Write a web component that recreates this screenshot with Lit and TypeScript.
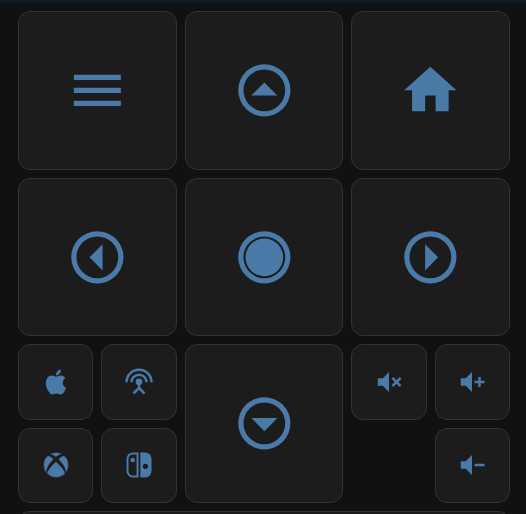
import { LitElement, html, css, svg } from "lit";
import { customElement } from "lit/decorators.js";

const RING = "M12,2A10,10 0 0,1 22,12A10,10 0 0,1 12,22A10,10 0 0,1 2,12A10,10 0 0,1 12,2M12,4A8,8 0 0,0 4,12A8,8 0 0,0 12,20A8,8 0 0,0 20,12A8,8 0 0,0 12,4Z";
const SPK = "M3,9H7L12,4V20L7,15H3V9";

const ICONS: Record<string, unknown> = {
  menu: svg`<path d="M3,6H21V8H3V6M3,11H21V13H3V11M3,16H21V18H3V16Z"/>`,
  up: svg`<path fill-rule="evenodd" d="${RING}M7,14L12,9L17,14Z"/>`,
  down: svg`<path fill-rule="evenodd" d="${RING}M7,10L12,15L17,10Z"/>`,
  left: svg`<path fill-rule="evenodd" d="${RING}M14,7L9,12L14,17Z"/>`,
  right: svg`<path fill-rule="evenodd" d="${RING}M10,17L15,12L10,7Z"/>`,
  ok: svg`<path fill-rule="evenodd" d="${RING}"/><circle cx="12" cy="12" r="7.2"/>`,
  home: svg`<path d="M10,20V14H14V20H19V12H22L12,3L2,12H5V20H10Z"/>`,
  apple: svg`<path d="M18.71,19.5C17.88,20.74 17,21.95 15.66,21.97C14.32,22 13.89,21.18 12.37,21.18C10.84,21.18 10.37,21.95 9.1,22C7.79,22.05 6.8,20.68 5.96,19.47C4.25,17 2.94,12.45 4.7,9.39C5.57,7.87 7.13,6.91 8.82,6.88C10.1,6.86 11.32,7.75 12.11,7.75C12.89,7.75 14.37,6.68 15.92,6.84C16.57,6.87 18.39,7.1 19.56,8.82C19.47,8.88 17.39,10.1 17.41,12.63C17.44,15.65 20.06,16.66 20.09,16.67C20.06,16.74 19.67,18.11 18.71,19.5M13,3.5C13.73,2.67 14.94,2.04 15.94,2C16.07,3.17 15.6,4.35 14.9,5.19C14.21,6.04 13.07,6.7 11.95,6.61C11.8,5.46 12.36,4.26 13,3.5Z"/>`,
  cast: svg`<g fill="none" stroke="currentColor" stroke-width="2"><path d="M2,12.2A10,10 0 0 1 22,12.2"/><path d="M6,12.2A6,6 0 0 1 18,12.2"/><path d="M12,12V16.8L7.6,21.2M12,16.8L16.4,21.2"/></g><circle cx="12" cy="11.8" r="2.7"/>`,
  xbox: svg`<path class="xb" d="M6.43,3.72C6.5,3.66 6.57,3.6 6.62,3.56C8.18,2.56 10,2 12,2C13.88,2 15.64,2.5 17.14,3.42C17.25,3.5 17.54,3.69 17.7,3.88C16.25,2.28 12,5.7 12,5.7C10.5,4.57 9.17,3.8 8.16,3.5C7.31,3.29 6.73,3.5 6.46,3.7M19.34,5.21C19.29,5.16 19.24,5.11 19.2,5.06C18.84,4.66 18.38,4.56 18,4.59C17.61,4.71 15.9,5.32 13.8,7.31C13.8,7.31 16.17,9.61 17.62,11.96C19.07,14.31 19.93,16.16 19.4,18.73C21,16.95 22,14.59 22,12C22,9.38 21,7 19.34,5.21M15.73,12.96C15.08,12.24 14.13,11.21 12.86,9.95C12.59,9.68 12.3,9.4 12,9.1C12,9.1 11.53,9.56 10.93,10.17C10.16,10.94 9.17,11.95 8.61,12.54C7.63,13.59 4.81,16.89 4.65,18.74C4.65,18.74 4,17.28 5.4,13.89C6.3,11.68 9,8.36 10.15,7.28C10.15,7.28 9.12,6.14 7.82,5.35L7.77,5.32C7.14,4.95 6.46,4.66 5.8,4.62C5.13,4.67 4.71,5.16 4.71,5.16C3.03,6.95 2,9.35 2,12A10,10 0 0,0 12,22C14.93,22 17.57,20.74 19.4,18.73C19.4,18.73 19.19,17.4 17.84,15.5C17.53,15.07 16.37,13.69 15.73,12.96Z"/>`,
  nswitch: svg`<path fill-rule="evenodd" d="M10.04,20.4H7.12C6.19,20.4 5.3,20 4.64,19.36C4,18.7 3.6,17.81 3.6,16.88V7.12C3.6,6.19 4,5.3 4.64,4.64C5.3,4 6.19,3.62 7.12,3.62H10.04V20.4M7.12,2A5.12,5.12 0 0,0 2,7.12V16.88C2,19.71 4.29,22 7.12,22H11.65V2H7.12M5.11,8C5.11,9.04 5.95,9.88 7,9.88C8.03,9.88 8.87,9.04 8.87,8C8.87,6.96 8.03,6.12 7,6.12C5.95,6.12 5.11,6.96 5.11,8M17.15,11C18.3,11 19.25,11.95 19.25,13.1C19.25,14.25 18.3,15.2 17.15,15.2C16,15.2 15.05,14.25 15.05,13.1C15.05,11.95 16,11 17.15,11M16.88,22A5.12,5.12 0 0,0 22,16.88V7.12C22,4.29 19.71,2 16.88,2H13.06V22H16.88Z"/>`,
  mute: svg`<path d="${SPK}M16.59,12L14,9.41L15.41,8L18,10.59L20.59,8L22,9.41L19.41,12L22,14.59L20.59,16L18,13.41L15.41,16L14,14.59L16.59,12Z"/>`,
  plus: svg`<path d="${SPK}M14,11H17V8H19V11H22V13H19V16H17V13H14V11Z"/>`,
  minus: svg`<path d="${SPK}M14,11H22V13H14V11Z"/>`,
};

type Cell = { icon: string; big?: boolean };

const CELLS: Cell[] = [
  { icon: "menu", big: true },
  { icon: "up", big: true },
  { icon: "home", big: true },
  { icon: "left", big: true },
  { icon: "ok", big: true },
  { icon: "right", big: true },
  { icon: "apple" },
  { icon: "cast" },
  { icon: "down", big: true },
  { icon: "mute" },
  { icon: "plus" },
  { icon: "xbox" },
  { icon: "nswitch" },
  { icon: "" },
  { icon: "minus" },
];

@customElement("app-root")
export class AppRoot extends LitElement {
  static styles = css`
    :host {
      display: block;
      width: 526px;
      height: 514px;
      overflow: hidden;
      background: #111111;
    }
    .strip {
      height: 3px;
      background: #0f1b22;
    }
    .grid {
      display: grid;
      grid-template-columns: repeat(6, 75.333px);
      grid-auto-rows: 75.333px;
      gap: 8px;
      padding: 8px 16px 0 18px;
    }
    .card {
      box-sizing: border-box;
      display: flex;
      align-items: center;
      justify-content: center;
      background: #1c1c1c;
      border: 1px solid #333333;
      border-radius: 12px;
      color: #4a7aa7;
    }
    .big {
      grid-column: span 2;
      grid-row: span 2;
    }
    .wide {
      grid-column: 1 / -1;
    }
    svg {
      fill: currentColor;
      display: block;
      width: 30px;
      height: 30px;
    }
    .big svg {
      width: 62.7px;
      height: 62.7px;
    }
    .xb {
      stroke: #1c1c1c;
      stroke-width: 0.4;
    }
  `;

  render() {
    return html`
      <div class="strip"></div>
      <div class="grid">
        ${CELLS.map((c) =>
          c.icon
            ? html`<div class="card ${c.big ? "big" : ""}">
                <svg viewBox="0 0 24 24">${ICONS[c.icon]}</svg>
              </div>`
            : html`<div></div>`
        )}
        <div class="card wide"></div>
      </div>
    `;
  }
}
